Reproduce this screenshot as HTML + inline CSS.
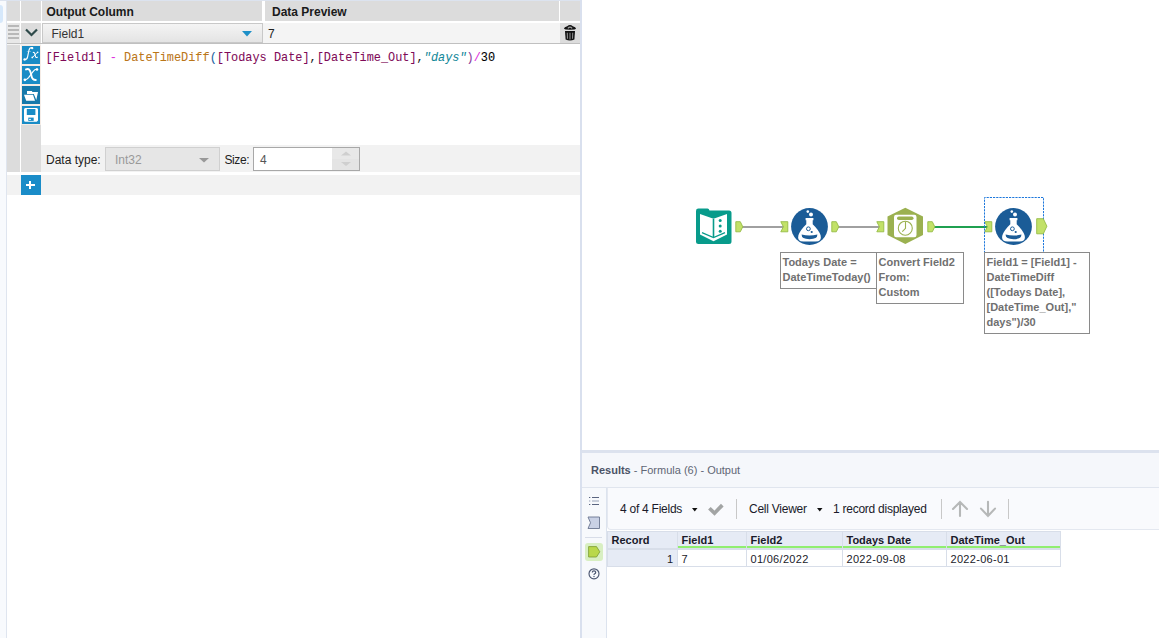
<!DOCTYPE html>
<html><head><meta charset="utf-8">
<style>
*{margin:0;padding:0;box-sizing:border-box}
html,body{width:1159px;height:638px;overflow:hidden;background:#fff;font-family:"Liberation Sans",sans-serif;position:relative}
.a{position:absolute}
.hdr{font-weight:bold;font-size:12px;color:#1a1a1a}
.ann{border:1px solid #8a8a8a;background:#fff;font-size:11px;font-weight:bold;color:#707070;line-height:15px;padding:2px 0 0 1.5px;white-space:nowrap}
.tb{font-size:12px;letter-spacing:-0.25px;color:#1a1a2a;white-space:nowrap}
.th{height:16px;background:#e6ebf5;font-size:11px;font-weight:bold;color:#1a1a2a;padding:2px 0 0 3.5px;white-space:nowrap}
.td{height:16px;background:#fff;font-size:11px;color:#1a1a2a;padding:3px 0 0 3.5px;letter-spacing:0.3px;white-space:nowrap}
.mono{font-family:"Liberation Mono",monospace;font-size:11.9px;white-space:pre;-webkit-text-stroke:0.05px}
</style></head><body>
<!-- LEFT PANEL -->
<div class="a" style="left:0;top:0;width:6px;height:638px;background:#f8fafd"></div>
<div class="a" style="left:0;top:5px;width:3px;height:18px;background:#d6e8fb;border-radius:0 3px 3px 0"></div>
<div class="a" style="left:6px;top:0;width:1px;height:638px;background:#dfe5ef"></div>
<div class="a" style="left:0;top:0;width:582px;height:1px;background:#dce3ef"></div>
<div class="a" style="left:580px;top:0;width:2px;height:638px;background:#d9e0ee"></div>

<!-- header row -->
<div class="a" style="left:7px;top:1px;width:13px;height:20px;background:#dcdcdc"></div>
<div class="a" style="left:21px;top:1px;width:20px;height:20px;background:#dcdcdc"></div>
<div class="a" style="left:42px;top:1px;width:220px;height:20px;background:#dcdcdc"></div>
<div class="a" style="left:265px;top:1px;width:294px;height:20px;background:#dcdcdc"></div>
<div class="a" style="left:560px;top:1px;width:20px;height:20px;background:#dcdcdc"></div>
<div class="a hdr" style="left:46.5px;top:5px">Output Column</div>
<div class="a hdr" style="left:272px;top:5px">Data Preview</div>

<!-- field row -->
<div class="a" style="left:7px;top:23px;width:13px;height:20px;background:#e8e8e8"></div>
<div class="a" style="left:8px;top:25px;width:11px;height:2px;background:#b8b8b8"></div>
<div class="a" style="left:8px;top:29px;width:11px;height:2px;background:#b8b8b8"></div>
<div class="a" style="left:8px;top:33px;width:11px;height:2px;background:#b8b8b8"></div>
<div class="a" style="left:8px;top:37px;width:11px;height:2px;background:#b8b8b8"></div>
<div class="a" style="left:21px;top:23px;width:20px;height:20px;background:#dcdcdc"></div>
<svg class="a" style="left:21px;top:23px" width="20" height="20"><path d="M5 6.5 L10.5 12 L16 6.5" fill="none" stroke="#2e4a4a" stroke-width="2.2"/></svg>
<div class="a" style="left:42px;top:23px;width:221px;height:20px;background:linear-gradient(#f4f4f4,#e4e4e4);border:1px solid #c8c8c8"></div>
<div class="a" style="left:51.5px;top:27px;font-size:12px;color:#333">Field1</div>
<svg class="a" style="left:242px;top:31px" width="11" height="6"><path d="M0 0 L10 0 L5 5.5 Z" fill="#1e90c8"/></svg>
<div class="a" style="left:263px;top:23px;width:297px;height:20px;background:#f4f4f4"></div>
<div class="a" style="left:268px;top:27px;font-size:12px;color:#222">7</div>
<div class="a" style="left:560px;top:23px;width:20px;height:20px;background:#dcdcdc"></div>
<svg class="a" style="left:558px;top:22px" width="24" height="24" viewBox="0 0 24 24"><path d="M6 6.6 Q6.2 4.9 9.2 4.3 Q10.6 2.9 12 2.9 Q13.4 2.9 14.8 4.3 Q17.8 4.9 18 6.6 Q18 7.8 12 7.8 Q6 7.8 6 6.6 Z" fill="#111"/><path d="M9.9 6.4 Q12 3.9 14.1 6.4" fill="none" stroke="#a0a0a0" stroke-width="1.2"/><path d="M7 9 L17 9 L16.4 17.6 Q12 19.6 7.6 17.6 Z" fill="#111"/><path d="M9.3 10.8 L9.5 16.8 M12 10.8 L12 17.4 M14.7 10.8 L14.5 16.8" stroke="#8a8a8a" stroke-width="1.1"/></svg>
<div class="a" style="left:7px;top:43px;width:573px;height:1px;background:#c0c0c0"></div>

<!-- formula area -->
<div class="a" style="left:7px;top:44px;width:34px;height:1px;background:#f4f4f4"></div>
<div class="a" style="left:7px;top:45px;width:13px;height:127px;background:#dcdcdc"></div>
<div class="a" style="left:21px;top:45px;width:20px;height:127px;background:#dcdcdc"></div>
<div class="a" style="left:21px;top:45px;width:20px;height:80px;background:#f5ece6"></div>


<!-- formula icons -->
<svg class="a" style="left:22px;top:46px" width="18" height="18" viewBox="0 0 18 18"><rect width="18" height="18" fill="#1a8cc6"/>
<path d="M10.2 1.6 Q7.6 1.2 6.9 4.5 L5.6 10.8 Q5 13.8 2.3 13.6" fill="none" stroke="#fff" stroke-width="1.15" stroke-linecap="round"/>
<circle cx="10.2" cy="2.2" r="1.15" fill="#fff"/><circle cx="2.6" cy="13.4" r="1.2" fill="#fff"/>
<path d="M4.8 5.6 L9 5.6" stroke="#fff" stroke-width="0.6" opacity="0.6"/>
<path d="M11.2 6.4 Q12.4 6 12.9 8 L13.5 10.6 Q14 12 15.3 11.2" fill="none" stroke="#fff" stroke-width="1.1" stroke-linecap="round"/>
<path d="M15.6 6.2 L10.6 11.4" fill="none" stroke="#fff" stroke-width="0.9"/>
<circle cx="15.6" cy="6.3" r="0.9" fill="#fff"/><circle cx="10.3" cy="11.4" r="0.9" fill="#fff"/>
</svg>
<svg class="a" style="left:22px;top:66px" width="18" height="18" viewBox="0 0 18 18"><rect width="18" height="18" fill="#1a8cc6"/>
<path d="M4 3.4 Q6.6 2.2 7.9 4.6 Q9 7 9.5 10 Q10.2 14 13.8 14" fill="none" stroke="#fff" stroke-width="1.9" stroke-linecap="round"/>
<path d="M15.3 3.2 Q13 2.8 11 5.6 L6.6 11.6 Q4.6 14 2.6 13.8" fill="none" stroke="#fff" stroke-width="1.1" stroke-linecap="round"/>
<circle cx="15" cy="3.4" r="1.25" fill="#fff"/><circle cx="2.9" cy="13.8" r="1.4" fill="#fff"/>
</svg>
<svg class="a" style="left:22px;top:86px" width="18" height="18" viewBox="0 0 18 18"><rect width="18" height="18" fill="#1679ab"/>
<path d="M5 5 L10 5 L10.3 6 L16 6 L14.3 14 L11.8 8 L5 8 Z" fill="#fff"/>
<path d="M2 8.8 L11 8.8 L13 14.8 L4.2 14.8 Z" fill="#fff"/>
</svg>
<svg class="a" style="left:22px;top:106px" width="18" height="18" viewBox="0 0 18 18"><rect width="18" height="18" fill="#1a8cc6"/>
<path d="M2 3.5 Q2 2 3.5 2 L14.5 2 Q16 2 16 3.5 L16 14.5 L14.7 15.8 L3.5 15.8 Q2 15.8 2 14.3 Z" fill="#fff"/>
<rect x="4.8" y="3" width="8.6" height="6" fill="#1a8cc6"/>
<rect x="6.3" y="11.6" width="5.4" height="3.3" fill="#1a8cc6"/>
<rect x="7" y="12.9" width="2" height="0.9" fill="#fff"/>
</svg>

<div class="a mono" style="left:45.5px;top:51px"><span style="color:#800a58">[Field1]</span> <span style="color:#e030e0">-</span> <span style="color:#bb7618">DateTimeDiff</span><span style="color:#1a62a0">(</span><span style="color:#800a58">[Todays Date]</span><span style="color:#222">,</span><span style="color:#800a58">[DateTime_Out]</span><span style="color:#222">,</span><span style="color:#14899a;font-style:italic">"days"</span><span style="color:#8a3a9a">)</span><span style="color:#e030e0">/</span><span style="color:#000;-webkit-text-stroke:0.1px">30</span></div>

<!-- data type row -->
<div class="a" style="left:41px;top:145px;width:539px;height:27px;background:#f2f2f2"></div>
<div class="a" style="left:46px;top:153px;font-size:12px;color:#222">Data type:</div>
<div class="a" style="left:105px;top:147px;width:115px;height:24px;background:#e6e6e6;border:1px solid #d0d0d0"></div>
<div class="a" style="left:115px;top:153px;font-size:12px;color:#999">Int32</div>
<svg class="a" style="left:199px;top:158px" width="11" height="5"><path d="M0 0 L10 0 L5 4.5 Z" fill="#999"/></svg>
<div class="a" style="left:224.5px;top:153px;font-size:12px;letter-spacing:-0.4px;color:#222">Size:</div>
<div class="a" style="left:253px;top:147px;width:107px;height:24px;background:#fff;border:1px solid #a8a8a8"></div>
<div class="a" style="left:332px;top:148px;width:27px;height:11px;background:#e8e8e8"></div>
<div class="a" style="left:332px;top:159px;width:27px;height:11px;background:#e4e4e4"></div>
<svg class="a" style="left:340px;top:151px" width="12" height="16"><path d="M1 4.5 L6 0.5 L11 4.5 Z" fill="#cfcfcf"/><path d="M1 11 L11 11 L6 15 Z" fill="#cfcfcf"/></svg>
<div class="a" style="left:260px;top:153px;font-size:12px;color:#555">4</div>

<!-- + row -->
<div class="a" style="left:7px;top:175px;width:573px;height:20px;background:#f2f2f2"></div>
<div class="a" style="left:21px;top:175px;width:20px;height:20px;background:#1a8cc8"></div>
<div class="a" style="left:26px;top:184px;width:8.5px;height:2px;background:#fff"></div>
<div class="a" style="left:29.2px;top:180.8px;width:2px;height:8.2px;background:#fff"></div>


<!-- CANVAS -->
<!-- connections -->
<div class="a" style="left:742px;top:226px;width:42px;height:2px;background:#a0a0a0"></div>
<div class="a" style="left:838px;top:226px;width:42px;height:2px;background:#a0a0a0"></div>
<div class="a" style="left:934px;top:226px;width:54px;height:2px;background:#1fa050"></div>

<!-- text input tool -->
<svg class="a" style="left:695px;top:208px" width="38" height="37" viewBox="0 0 38 37">
<path d="M1 3 Q1 0.6 3.4 0.6 L12.5 0.6 Q14 0.6 14.5 2.4 L34 2.4 Q36.5 2.4 36.5 5 L36.5 33.5 Q36.5 36 34 36 L3.5 36 Q1 36 1 33.5 Z" fill="#089b8b"/>
<path d="M5 6 L18.5 10.8 L32 6 L32 26.5 L18.5 33.2 L5 26.5 Z" fill="#fff"/>
<path d="M18.5 11 L18.5 29" stroke="#089b8b" stroke-width="1.6"/>
<path d="M7 24.6 L18.5 29.6 L30 24.6" fill="none" stroke="#089b8b" stroke-width="1.2"/>
<circle cx="25.2" cy="12.6" r="1.5" fill="#089b8b"/><circle cx="25.2" cy="17.9" r="1.5" fill="#089b8b"/><circle cx="25.2" cy="23.2" r="1.5" fill="#089b8b"/>
</svg>
<!-- out anchor -->
<svg class="a" style="left:735px;top:221px" width="9" height="12" viewBox="0 0 9 12"><path d="M0.8 0.7 L5.3 0.7 L7.8 5.75 L5.3 10.8 L0.8 10.8 Z" fill="#c2e168" stroke="#95bb45" stroke-width="0.9" stroke-linejoin="round"/></svg>

<!-- formula tool 1 -->
<svg class="a" style="left:780px;top:221px" width="9" height="12" viewBox="0 0 9 12"><path d="M0.8 0.7 L7.8 0.7 L7.8 10.8 L0.8 10.8 L3.4 5.75 Z" fill="#c2e168" stroke="#95bb45" stroke-width="0.9" stroke-linejoin="round"/></svg>
<svg class="a" style="left:791px;top:208px" width="37" height="37" viewBox="0 0 37 37" id="flask1">
<circle cx="18.5" cy="18.5" r="18.4" fill="#1b5c97"/>
<circle cx="16.8" cy="3.6" r="1.3" fill="#fff"/><circle cx="20" cy="6.6" r="2" fill="#fff"/>
<path d="M14.6 10 L22.4 10 L22.4 12.2 L21.7 12.2 L21.7 16.2 Q27.8 22 29.6 27.3 Q31.2 33.6 24.5 33.6 L12.5 33.6 Q5.8 33.6 7.4 27.3 Q9.2 22 15.3 16.2 L15.3 12.2 L14.6 12.2 Z" fill="#fff"/>
<path d="M10.6 26.6 Q18.5 28.4 26.4 26.6 Q26.6 31.2 18.5 31.2 Q10.4 31.2 10.6 26.6 Z" fill="#1b5c97"/>
<circle cx="17.4" cy="20.8" r="1.9" fill="none" stroke="#1b5c97" stroke-width="1"/><circle cx="20.7" cy="24" r="1.1" fill="#1b5c97"/>
</svg>
<svg class="a" style="left:831px;top:221px" width="9" height="12" viewBox="0 0 9 12"><path d="M0.8 0.7 L5.3 0.7 L7.8 5.75 L5.3 10.8 L0.8 10.8 Z" fill="#c2e168" stroke="#95bb45" stroke-width="0.9" stroke-linejoin="round"/></svg>

<!-- datetime tool -->
<svg class="a" style="left:876px;top:221px" width="9" height="12" viewBox="0 0 9 12"><path d="M0.8 0.7 L7.8 0.7 L7.8 10.8 L0.8 10.8 L3.4 5.75 Z" fill="#c2e168" stroke="#95bb45" stroke-width="0.9" stroke-linejoin="round"/></svg>
<svg class="a" style="left:887px;top:207px" width="37" height="38" viewBox="0 0 37 38">
<path d="M18.3 0.8 L36 9.6 L36 28.1 L18.3 37 L0.5 28.1 L0.5 9.6 Z" fill="#9bb150"/>
<rect x="7" y="7.7" width="22.5" height="22.5" rx="2.2" fill="#fff"/>
<rect x="10" y="9.5" width="16.5" height="3.5" rx="1.75" fill="#9bb150"/>
<circle cx="18.3" cy="21.2" r="7" fill="none" stroke="#9bb150" stroke-width="1.1"/>
<path d="M18.5 14.5 L18.5 21.3 L15.3 24.6" fill="none" stroke="#9bb150" stroke-width="1.1"/>
</svg>
<svg class="a" style="left:927px;top:221px" width="9" height="12" viewBox="0 0 9 12"><path d="M0.8 0.7 L5.3 0.7 L7.8 5.75 L5.3 10.8 L0.8 10.8 Z" fill="#c2e168" stroke="#95bb45" stroke-width="0.9" stroke-linejoin="round"/></svg>

<!-- formula tool 2 (selected) -->
<svg class="a" style="left:984px;top:221px" width="9" height="12" viewBox="0 0 9 12"><path d="M0.8 0.7 L7.8 0.7 L7.8 10.8 L0.8 10.8 L3.4 5.75 Z" fill="#c2e168" stroke="#95bb45" stroke-width="0.9" stroke-linejoin="round"/></svg>
<svg class="a" style="left:995px;top:208px" width="37" height="37" viewBox="0 0 37 37">
<circle cx="18.5" cy="18.5" r="18.4" fill="#1b5c97"/>
<circle cx="16.8" cy="3.6" r="1.3" fill="#fff"/><circle cx="20" cy="6.6" r="2" fill="#fff"/>
<path d="M14.6 10 L22.4 10 L22.4 12.2 L21.7 12.2 L21.7 16.2 Q27.8 22 29.6 27.3 Q31.2 33.6 24.5 33.6 L12.5 33.6 Q5.8 33.6 7.4 27.3 Q9.2 22 15.3 16.2 L15.3 12.2 L14.6 12.2 Z" fill="#fff"/>
<path d="M10.6 26.6 Q18.5 28.4 26.4 26.6 Q26.6 31.2 18.5 31.2 Q10.4 31.2 10.6 26.6 Z" fill="#1b5c97"/>
<circle cx="17.4" cy="20.8" r="1.9" fill="none" stroke="#1b5c97" stroke-width="1"/><circle cx="20.7" cy="24" r="1.1" fill="#1b5c97"/>
</svg>
<svg class="a" style="left:984px;top:197px" width="60" height="56"><path d="M0.5 56 L0.5 0.5 L59.5 0.5 L59.5 56" fill="none" stroke="#1e78dc" stroke-width="1" stroke-dasharray="2.2,1"/></svg>
<svg class="a" style="left:1036px;top:218px" width="12" height="17" viewBox="0 0 12 17"><path d="M0.7 0.7 L7.3 0.7 L10.9 8.2 L7.3 15.8 L0.7 15.8 Z" fill="#c2e168" stroke="#95bb45" stroke-width="0.9" stroke-linejoin="round"/></svg>


<!-- annotations -->
<div class="a ann" style="left:780px;top:252px;width:97px;height:37px">Todays Date =<br>DateTimeToday()</div>
<div class="a ann" style="left:876px;top:252px;width:88px;height:52px">Convert Field2<br>From:<br>Custom</div>
<div class="a ann" style="left:984px;top:252px;width:106px;height:82px">Field1 = [Field1] -<br>DateTimeDiff<br>([Todays Date],<br>[DateTime_Out],"<br>days")/30</div>

<!-- RIGHT: canvas separator -->
<div class="a" style="left:582px;top:450px;width:577px;height:3px;background:#dce2ee"></div>

<!-- RESULTS PANEL -->
<div class="a" style="left:582px;top:453px;width:577px;height:185px;background:#fff"></div>
<div class="a" style="left:582px;top:453px;width:577px;height:34px;background:#f5f7fb"></div>
<div class="a" style="left:582px;top:487px;width:577px;height:1px;background:#e0e5ee"></div>
<div class="a" style="left:591px;top:464px;font-size:11px;color:#5f6675;white-space:nowrap"><b style="color:#4b5366">Results</b> - Formula (6) - Output</div>
<!-- side icons -->
<div class="a" style="left:582px;top:488px;width:24px;height:150px;background:#f7f9fc"></div>
<div class="a" style="left:606px;top:488px;width:1px;height:150px;background:#dce3ee"></div>
<svg class="a" style="left:588px;top:495px" width="12" height="11" viewBox="0 0 12 11"><path d="M1 2.5 h1.3 M1 9.5 h1.3" stroke="#5a6580" stroke-width="1"/><path d="M1 6 h1.3 M4 6 h7" stroke="#9aa3b8" stroke-width="1.2"/><path d="M4 2.5 h7 M4 9.5 h7" stroke="#5a6580" stroke-width="1"/></svg>
<svg class="a" style="left:587px;top:516px" width="14" height="14" viewBox="0 0 14 14"><path d="M1 1 L12.5 1 L12.5 12.5 L1 12.5 L3.5 6.75 Z" fill="#c9d1e5" stroke="#6a7590" stroke-width="0.9"/></svg>
<div class="a" style="left:585px;top:537px;width:17px;height:1px;background:#d8dde8"></div>
<div class="a" style="left:585px;top:543px;width:18px;height:18px;background:#d8efc2;border-radius:3px"></div>
<svg class="a" style="left:588px;top:546px" width="13" height="12" viewBox="0 0 13 12"><path d="M0.6 0.6 L8.5 0.6 L11.8 5.8 L8.5 11 L0.6 11 Z" fill="#b9d84a" stroke="#7a9a30" stroke-width="0.8"/></svg>
<svg class="a" style="left:588px;top:568px" width="12" height="12" viewBox="0 0 12 12"><circle cx="6" cy="5.8" r="5" fill="none" stroke="#4d5872" stroke-width="1.15"/><path d="M4.3 4.6 Q4.3 2.9 6 2.9 Q7.7 2.9 7.7 4.4 Q7.7 5.3 6.6 5.8 Q6 6.1 6 7" fill="none" stroke="#4d5872" stroke-width="1.2"/><rect x="5.4" y="7.9" width="1.2" height="1.2" fill="#4d5872"/></svg>
<!-- toolbar -->
<div class="a" style="left:607px;top:488px;width:552px;height:42px;background:#f9fafd;border-bottom:1px solid #e4e8f0;border-left:1px solid #e4e8f0;border-bottom-left-radius:4px"></div>
<div class="a tb" style="left:620px;top:502px">4 of 4 Fields</div>
<svg class="a" style="left:692px;top:508px" width="6" height="4"><path d="M0 0 L5.5 0 L2.75 3.5 Z" fill="#111"/></svg>
<svg class="a" style="left:707px;top:502px" width="18" height="15" viewBox="0 0 18 15"><path d="M2.4 6.2 L7.5 11.2 L15.3 3.1" fill="none" stroke="#a2a4a4" stroke-width="3.7"/></svg>
<div class="a" style="left:736px;top:499px;width:1px;height:20px;background:#c8c8c8"></div>
<div class="a tb" style="left:749px;top:502px">Cell Viewer</div>
<svg class="a" style="left:817px;top:508px" width="6" height="4"><path d="M0 0 L5.5 0 L2.75 3.5 Z" fill="#111"/></svg>
<div class="a tb" style="left:833px;top:502px">1 record displayed</div>
<div class="a" style="left:941px;top:499px;width:1px;height:20px;background:#c8c8c8"></div>
<svg class="a" style="left:951px;top:500px" width="18" height="18" viewBox="0 0 18 18"><path d="M9 2 L9 16 M2 9 L9 2 L16 9" fill="none" stroke="#b6b8b8" stroke-width="2.1" stroke-linecap="round"/></svg>
<svg class="a" style="left:979px;top:500px" width="18" height="18" viewBox="0 0 18 18"><path d="M9 1.8 L9 16 M2 8.6 L9 16 L16 8.6" fill="none" stroke="#b6b8b8" stroke-width="2.1" stroke-linecap="round"/></svg>
<div class="a" style="left:1008px;top:499px;width:1px;height:20px;background:#c8c8c8"></div>
<!-- table -->
<div class="a" style="left:607px;top:531px;width:454px;height:36px;background:#d8dee9"></div>
<div class="a th" style="left:608px;top:532px;width:69px">Record</div>
<div class="a th" style="left:678px;top:532px;width:68px">Field1</div>
<div class="a th" style="left:747px;top:532px;width:95px">Field2</div>
<div class="a th" style="left:843px;top:532px;width:103px">Todays Date</div>
<div class="a th" style="left:947px;top:532px;width:113px">DateTime_Out</div>
<div class="a" style="left:678px;top:546px;width:68px;height:2px;background:#90ee70"></div>
<div class="a" style="left:747px;top:546px;width:95px;height:2px;background:#90ee70"></div>
<div class="a" style="left:843px;top:546px;width:103px;height:2px;background:#90ee70"></div>
<div class="a" style="left:947px;top:546px;width:113px;height:2px;background:#90ee70"></div>
<div class="a td" style="left:608px;top:550px;width:69px;background:#e6ebf5;text-align:right;padding:3px 3.5px 0 0">1</div>
<div class="a td" style="left:678px;top:550px;width:68px">7</div>
<div class="a td" style="left:747px;top:550px;width:95px">01/06/2022</div>
<div class="a td" style="left:843px;top:550px;width:103px">2022-09-08</div>
<div class="a td" style="left:947px;top:550px;width:113px">2022-06-01</div>

</body></html>
